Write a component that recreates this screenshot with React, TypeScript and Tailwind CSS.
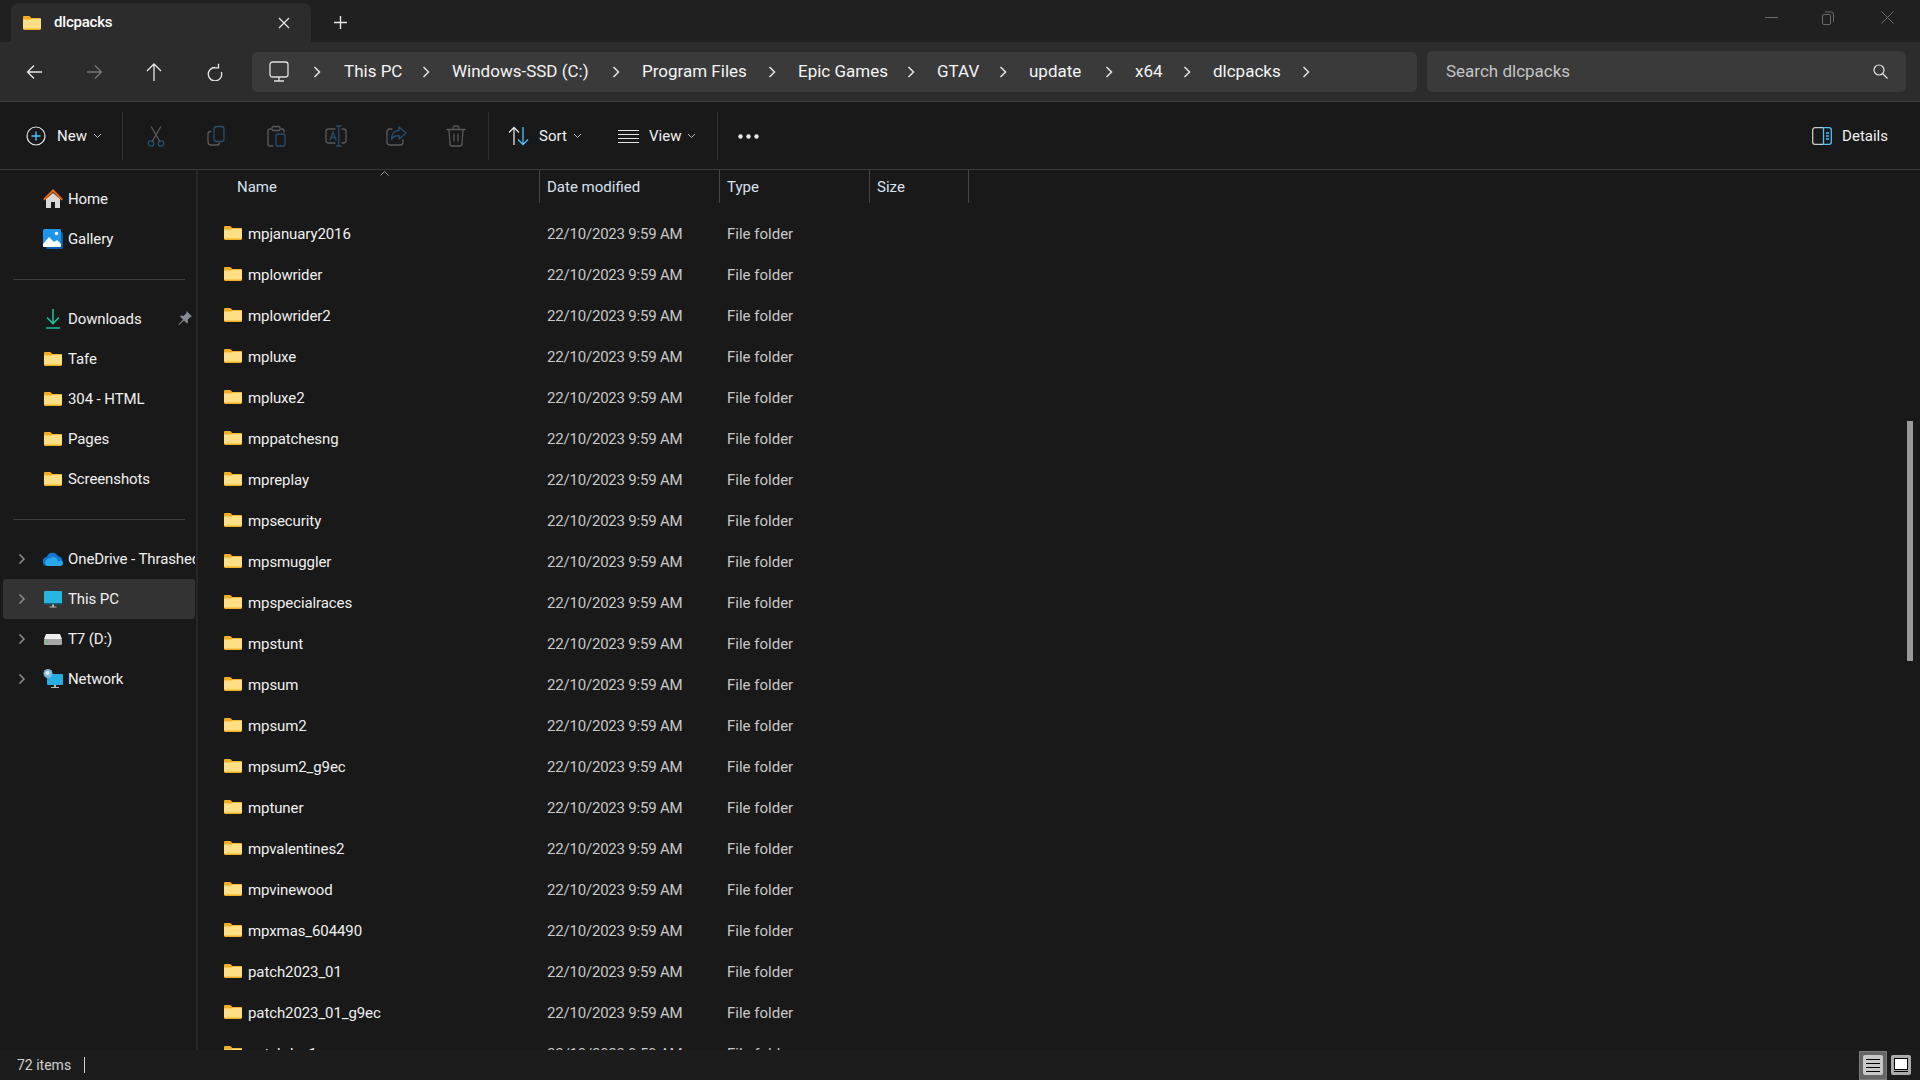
import React from "react";

const FONT = "font-['Roboto','Noto_Sans',sans-serif]";

function Folder({ className = "" }: { className?: string }) {
  return (
    <svg viewBox="0 0 18 14" className={className} width="18" height="14">
      <path d="M0 1.200C0 .5.5 0 1.200 0h4.600c.4 0 .7.1 1 .4L8.400 2H16.800c.7 0 1.200.5 1.200 1.200V4H0z" fill="#f2ac1c" />
      <path d="M0 3h18v9.800c0 .7-.5 1.200-1.200 1.200H1.200C.5 14 0 13.500 0 12.800z" fill="#f0b020" />
      <path d="M0 3.600h7.500L9 2.800h9v9.600H0z" fill="#ffdf85" />
    </svg>
  );
}

const Chevron = () => (
  <svg width="8" height="14" viewBox="0 0 8 14" fill="none" stroke="#e4e4e4" strokeWidth="1.500" className="shrink-0">
    <path d="M1.500 2l5 5-5 5" />
  </svg>
);

const Small = () => (
  <svg width="9" height="6" viewBox="0 0 9 6" fill="none" stroke="#b8b8b8" strokeWidth="1">
    <path d="M1 1l3.500 3.500L8 1" />
  </svg>
);

function Crumb({ label, w }: { label: string; w: string }) {
  return <span className={`block shrink-0 ml-[22px] whitespace-nowrap ${w}`}>{label}</span>;
}

function Stroke({ children }: { children: React.ReactNode }) {
  return (
    <svg width="24" height="24" viewBox="0 0 24 24" fill="none" strokeWidth="1.300" strokeLinecap="round" strokeLinejoin="round">
      {children}
    </svg>
  );
}

const DIM = "#5a5a5a";
const BLUE = "#24506e";

const tools = [
  <Stroke key="cut">
    <circle cx="7" cy="19.500" r="2.700" stroke={BLUE} />
    <circle cx="17" cy="19.500" r="2.700" stroke={BLUE} />
    <path d="M8.500 17L16.500 3M15.500 17L7.500 3" stroke={DIM} />
  </Stroke>,
  <Stroke key="copy">
    <rect x="10" y="2.500" width="10" height="15" rx="2.500" stroke={BLUE} />
    <path d="M7 7.500H6.500A2.500 2.500 0 0 0 4 10v8a3 3 0 0 0 3 3h6a2.500 2.500 0 0 0 2.500-2" stroke={DIM} />
  </Stroke>,
  <Stroke key="paste">
    <path d="M7 5H6a2 2 0 0 0-2 2v13a2 2 0 0 0 2 2h3M17 5h1a2 2 0 0 1 2 1.500V8" stroke={DIM} />
    <rect x="8" y="2.500" width="8" height="4" rx="1.500" stroke={DIM} />
    <rect x="12" y="10" width="9" height="12" rx="2" stroke={BLUE} />
  </Stroke>,
  <Stroke key="rename">
    <path d="M11 5H4.500A2.500 2.500 0 0 0 2 7.500v9A2.500 2.500 0 0 0 4.500 19H11M18 5h1.500A2.500 2.500 0 0 1 22 7.500v9a2.500 2.500 0 0 1-2.500 2.500H18" stroke={DIM} />
    <path d="M12.500 2h4.500M12.500 22h4.500M14.800 2v20" stroke={BLUE} />
    <path d="M6 16l3-8 3 8M7 13.500h4" stroke={BLUE} />
  </Stroke>,
  <Stroke key="share">
    <path d="M8 5H6a3 3 0 0 0-3 3v10a3 3 0 0 0 3 3h10a3 3 0 0 0 3-3v-2" stroke={DIM} />
    <path d="M15 3l7 6-7 6v-3.500c-3.500 0-6 1-7.500 4 0-5 2.500-9 7.500-9z" stroke={BLUE} />
  </Stroke>,
  <Stroke key="del">
    <path d="M3 5.500h18M9 5.500V4a2 2 0 0 1 2-2h2a2 2 0 0 1 2 2v1.500M5 5.500l1 14.500a2 2 0 0 0 2 2h8a2 2 0 0 0 2-2l1-14.500M10 10.500v6.500M14 10.500v6.500" stroke={DIM} />
  </Stroke>,
];

const rows = [
  "mpjanuary2016", "mplowrider", "mplowrider2", "mpluxe", "mpluxe2", "mppatchesng", "mpreplay",
  "mpsecurity", "mpsmuggler", "mpspecialraces", "mpstunt", "mpsum", "mpsum2", "mpsum2_g9ec",
  "mptuner", "mpvalentines2", "mpvinewood", "mpxmas_604490", "patch2023_01", "patch2023_01_g9ec", "patchday1",
];

function NavRow({ icon, label, pin, expand, selected }: { icon: React.ReactNode; label: string; pin?: boolean; expand?: boolean; selected?: boolean }) {
  return (
    <div className={`h-10 ml-[3px] w-[192px] flex items-center rounded-[3px] relative overflow-hidden ${selected ? "bg-[#333333]" : ""}`}>
      <div className="w-[14px] ml-[12px] flex justify-center shrink-0">
        {expand && (
          <svg width="8" height="12" viewBox="0 0 8 12" fill="none" stroke="#8a8a8a" strokeWidth="1.600">
            <path d="M1.500 1.500L6 6l-4.500 4.500" />
          </svg>
        )}
      </div>
      <div className="w-[20px] ml-[14px] flex justify-center shrink-0">{icon}</div>
      <span className="ml-[5px] text-[15px] tracking-[-0.1px] text-[#f0f0f0] whitespace-nowrap shrink-0">{label}</span>
      {pin && (
        <svg className="absolute right-[3px] top-[12px]" width="14" height="15" viewBox="0 0 14 15" fill="#858b90">
          <path d="M8.500 0l5.500 5.500-1.500.5-3 3 .5 2.500-1 1-3-3L1 14l-.5-.5 4.500-5-3-3 1-1 2.500.5 3-3z" />
        </svg>
      )}
    </div>
  );
}

export default function App() {
  return (
    <div className={`w-[1920px] h-[1080px] overflow-hidden flex flex-col bg-[#191919] text-[#f0f0f0] ${FONT}`}>
      {/* Title bar */}
      <div className="h-[42px] bg-[#202020] flex items-end shrink-0 pl-[11px] relative">
        <div className="w-[300px] h-[39px] rounded-t-[8px] bg-[#2c2c2c] flex items-center pl-[12px]">
          <Folder className="shrink-0" />
          <span className="ml-[13px] text-[15px] font-medium tracking-[-0.2px] text-white flex-1">dlcpacks</span>
          <svg className="mr-[21px]" width="12" height="12" viewBox="0 0 12 12" stroke="#e8e8e8" strokeWidth="1.200"><path d="M1 1l10 10M11 1L1 11" /></svg>
        </div>
        <svg className="ml-[23px] mb-[13px]" width="13" height="13" viewBox="0 0 13 13" stroke="#e8e8e8" strokeWidth="1.400"><path d="M6.500 0v13M0 6.500h13" /></svg>
        <div className="ml-auto flex items-center h-[35px] self-start pr-[26px]">
          <svg width="13" height="1" className="mr-[44px]"><rect width="13" height="1" fill="#6a6a6a" /></svg>
          <svg width="12" height="14" viewBox="0 0 12 14" fill="none" stroke="#6a6a6a" className="mr-[47px]"><rect x=".5" y="3.500" width="8" height="10" rx="1.500" /><path d="M3 1h6.500A2 2 0 0 1 11.500 3v8" /></svg>
          <svg width="13" height="13" viewBox="0 0 13 13" stroke="#6a6a6a" strokeWidth="1"><path d="M.5.5l12 12M12.500.5l-12 12" /></svg>
        </div>
      </div>

      {/* Nav bar */}
      <div className="h-[60px] shrink-0 bg-[#2c2c2c] border-b border-[#3f3f3f] flex items-center">
        <div className="w-[252px] flex items-center shrink-0 pl-[26px] gap-[43px]">
          <svg width="17" height="16" viewBox="0 0 17 16" fill="none" stroke="#e8e8e8" strokeWidth="1.300"><path d="M16 8H1.500M8 1.500L1.500 8 8 14.500" /></svg>
          <svg width="17" height="16" viewBox="0 0 17 16" fill="none" stroke="#777" strokeWidth="1.300"><path d="M1 8h14.500M9 1.500L15.500 8 9 14.500" /></svg>
          <svg width="16" height="18" viewBox="0 0 16 18" fill="none" stroke="#e8e8e8" strokeWidth="1.300"><path d="M8 18V1.500M1 8l7-7 7 7" /></svg>
          <svg className="ml-[2px]" width="16" height="18" viewBox="0 0 16 18" fill="none" stroke="#e8e8e8" strokeWidth="1.300"><path d="M8 4.500A6.700 6.700 0 1 0 14.300 9M11.500 .8v4H7.500" /></svg>
        </div>
        <div className="w-[1165px] h-[40px] rounded-[5px] bg-[#3a3a3a] flex items-center text-[17px] text-[#f4f4f4] shrink-0">
          <svg className="ml-[17px] shrink-0" width="20" height="22" viewBox="0 0 20 22" fill="none" stroke="#e0e0e0" strokeWidth="1.300">
            <rect x="1" y="1" width="18" height="15" rx="2.500" /><path d="M10 16v4M5 20h10" />
          </svg>
          <div className="ml-[24px] mr-[1px] shrink-0"><Chevron /></div>
          <Crumb label="This PC" w="w-[78px]" />
          <Chevron />
          <Crumb label="Windows-SSD (C:)" w="w-[160px]" />
          <Chevron />
          <Crumb label="Program Files" w="w-[126px]" />
          <Chevron />
          <Crumb label="Epic Games" w="w-[109px]" />
          <Chevron />
          <Crumb label="GTAV" w="w-[62px]" />
          <Chevron />
          <Crumb label="update" w="w-[76px]" />
          <Chevron />
          <Crumb label="x64" w="w-[48px]" />
          <Chevron />
          <Crumb label="dlcpacks" w="w-[89px]" />
          <Chevron />
        </div>
        <div className="ml-[10px] w-[479px] h-[41px] rounded-[5px] bg-[#3a3a3a] flex items-center pl-[19px] text-[17px] text-[#c4c4c4] shrink-0">
          <span className="flex-1">Search dlcpacks</span>
          <svg className="mr-[18px]" width="15" height="15" viewBox="0 0 15 15" fill="none" stroke="#e4e4e4" strokeWidth="1.200"><circle cx="6" cy="6" r="5" /><path d="M9.500 9.500L14.500 14.500" /></svg>
        </div>
      </div>

      {/* Toolbar */}
      <div className="h-[68px] shrink-0 bg-[#191919] border-b border-[#3a3a3a] flex items-center text-[15px] pt-[1px]">
        <div className="ml-[26px] flex items-center">
          <svg width="20" height="20" viewBox="0 0 20 20" fill="none">
            <circle cx="10" cy="10" r="9" stroke="#e4e4e4" strokeWidth="1.200" />
            <path d="M10 5.500v9M5.500 10h9" stroke="#4cc2ff" strokeWidth="1.400" />
          </svg>
          <span className="ml-[11px] w-[36px]">New</span>
          <Small />
        </div>
        <div className="ml-[20px] w-px h-[48px] bg-[#2e2e2e]" />
        <div className="flex items-center ml-[21px] gap-[36px]">{tools}</div>
        <div className="ml-[20px] w-px h-[48px] bg-[#2e2e2e]" />
        <div className="ml-[19px] flex items-center">
          <svg width="21" height="20" viewBox="0 0 21 20" fill="none" strokeWidth="1.300">
            <path d="M6 19V1.500M1 6.500l5-5 5 5" stroke="#e4e4e4" />
            <path d="M15 1v17.500M10 13.500l5 5 5-5" stroke="#4cc2ff" />
          </svg>
          <span className="ml-[10px] w-[34px]">Sort</span>
          <Small />
        </div>
        <div className="ml-[36px] flex items-center">
          <svg width="21" height="15" viewBox="0 0 21 15" stroke="#e4e4e4" strokeWidth="1.200"><path d="M0 1.500h21M0 5.500h21M0 9.500h21M0 13.500h21" /></svg>
          <span className="ml-[10px] w-[38px]">View</span>
          <Small />
        </div>
        <div className="ml-[21px] w-px h-[48px] bg-[#2e2e2e]" />
        <svg className="ml-[20px]" width="21" height="5" viewBox="0 0 21 5" fill="#e8e8e8"><circle cx="2.500" cy="2.500" r="2.200" /><circle cx="10.500" cy="2.500" r="2.200" /><circle cx="18.500" cy="2.500" r="2.200" /></svg>
        <div className="ml-auto mr-[32px] flex items-center">
          <svg width="20" height="18" viewBox="0 0 20 18" fill="none" strokeWidth="1.300">
            <path d="M12 .7H3A2.300 2.300 0 0 0 .7 3v12A2.300 2.300 0 0 0 3 17.300h9" stroke="#c8c8c8" />
            <path d="M11.500 .7H17A2.300 2.300 0 0 1 19.300 3v12a2.300 2.300 0 0 1-2.300 2.300h-5.500zM14 6h3M14 9h3M14 12h3" stroke="#4cc2ff" />
          </svg>
          <span className="ml-[10px]">Details</span>
        </div>
      </div>

      {/* Main */}
      <div className="flex-1 flex min-h-0 relative">
        {/* Sidebar */}
        <div className="w-[198px] shrink-0 border-r-2 border-[#262626] pt-[9px] overflow-hidden">
          <NavRow label="Home" icon={
            <svg width="20" height="20" viewBox="0 0 20 20">
              <path d="M3 10v9h5v-6h4v6h5v-9l-7-6z" fill="#d8d8d8" />
              <path d="M0 10L10 0l10 10-1.500 1.500L10 3 1.500 11.500z" fill="#e8680c" />
            </svg>} />
          <NavRow label="Gallery" icon={
            <svg width="20" height="20" viewBox="0 0 20 20">
              <rect x="3" y="3" width="17" height="17" rx="1.500" fill="#0f5cb0" />
              <rect width="18" height="18" rx="1.500" fill="#1f95ea" />
              <path d="M0 15l6-7 5 5 3-2 4 4v2a1 1 0 0 1-1 1H1a1 1 0 0 1-1-1z" fill="#fff" />
              <circle cx="13.500" cy="4.500" r="1.800" fill="#fff" />
            </svg>} />
          <div className="h-px bg-[#3c3c3c] ml-[13px] w-[172px] my-[19.500px]" />
          <NavRow label="Downloads" pin icon={
            <svg width="16" height="20" viewBox="0 0 16 20" fill="none" stroke="#1fbf9a" strokeWidth="1.600"><path d="M8 0v14M2 8.500l6 6 6-6M1 19h14" /></svg>} />
          <NavRow label="Tafe" icon={<Folder />} />
          <NavRow label="304 - HTML" icon={<Folder />} />
          <NavRow label="Pages" icon={<Folder />} />
          <NavRow label="Screenshots" icon={<Folder />} />
          <div className="h-px bg-[#3c3c3c] ml-[13px] w-[172px] my-[19.500px]" />
          <NavRow label="OneDrive - Thrashed" expand icon={
            <svg width="20" height="14" viewBox="0 0 20 14">
              <path d="M4.500 14A4.500 4.500 0 0 1 3.800 5 6 6 0 0 1 15 4.300 5 5 0 0 1 16 14z" fill="#0f78d4" />
              <path d="M4.500 14a4 4 0 0 1 2-7.500 5 5 0 0 1 8.500 3h1A2.300 2.300 0 0 1 20 11a3 3 0 0 1-3 3z" fill="#29a8ea" />
            </svg>} />
          <NavRow label="This PC" expand selected icon={
            <svg width="18" height="17" viewBox="0 0 18 17">
              <rect width="18" height="13" rx="1" fill="#28b6e0" />
              <rect x="0" y="12" width="18" height="1.500" fill="#14607f" />
              <path d="M8 13.500h2v2H8zM5.500 15.500h7v1h-7z" fill="#b8b8b8" />
            </svg>} />
          <NavRow label="T7 (D:)" expand icon={
            <svg width="18" height="11" viewBox="0 0 18 11">
              <path d="M2 0h14l2 5H0z" fill="#eeeeee" />
              <rect y="5" width="18" height="6" rx="1" fill="#a8a8a8" />
              <rect x="2" y="7" width="2" height="1.500" fill="#38d070" />
            </svg>} />
          <NavRow label="Network" expand icon={
            <svg width="20" height="20" viewBox="0 0 20 20">
              <rect x="4" y="5" width="16" height="11" rx="1" fill="#26aee0" />
              <path d="M11 16h2v2h-2zM8 18h8v1H8z" fill="#b8b8b8" />
              <circle cx="5" cy="4.500" r="4.500" fill="#7fb8d8" />
              <circle cx="4.500" cy="4" r="2" fill="#d8eef8" />
            </svg>} />
        </div>

        {/* File list */}
        <div className="flex-1 min-w-0 overflow-hidden text-[15px]">
          <div className="h-[33px] flex relative text-[#d8e2ee]">
            <div className="w-[342px] pl-[39px] pt-[1px] flex items-center border-r border-[#454545]">Name</div>
            <div className="w-[180px] pl-[7px] pt-[1px] flex items-center border-r border-[#454545]">Date modified</div>
            <div className="w-[150px] pl-[7px] pt-[1px] flex items-center border-r border-[#454545]">Type</div>
            <div className="w-[99px] pl-[7px] pt-[1px] flex items-center border-r border-[#454545]">Size</div>
            <svg className="absolute left-[182px] top-[1px]" width="9" height="5" viewBox="0 0 9 5" fill="none" stroke="#9a9a9a"><path d="M.5 4.500l4-4 4 4" /></svg>
          </div>
          <div className="pt-[11px]">
            {rows.map((r) => (
              <div key={r} className="h-[41px] flex items-center">
                <div className="w-[342px] flex items-center pl-[26px]">
                  <Folder className="shrink-0 -mt-[3px]" />
                  <span className="ml-[6px] tracking-[-0.1px]">{r}</span>
                </div>
                <div className="w-[180px] pl-[7px] text-[#c8c8c8] tracking-[-0.2px]">22/10/2023 9:59 AM</div>
                <div className="pl-[7px] text-[#c8c8c8]">File folder</div>
              </div>
            ))}
          </div>
        </div>

        {/* Scrollbar */}
        <div className="absolute right-[7px] top-[251px] w-[6px] h-[240px] bg-[#999999]" />
      </div>

      {/* Status */}
      <div className="h-[30px] shrink-0 bg-[#1c1c1c] flex items-center text-[14px] text-[#d0d0d0] pl-[17px] relative">
        <span>72 items</span>
        <div className="ml-[13px] w-px h-[16px] bg-[#d0d0d0]" />
        <div className="ml-auto mr-[9px] flex items-center">
          <div className="w-[28px] h-[29px] bg-[#666666] border border-[#7a7a7a] flex items-center justify-center">
            <div className="w-[20px] h-[20px] rounded-[2px] bg-[#c8c8c8] flex flex-col justify-center gap-[3px] items-center">
              <div className="w-[14px] h-[1px] bg-black" /><div className="w-[14px] h-[1px] bg-black" /><div className="w-[14px] h-[1px] bg-black" /><div className="w-[14px] h-[1px] bg-black" />
            </div>
          </div>
          <div className="ml-[4px] w-[20px] h-[20px] rounded-[2px] bg-[#aaaaaa] flex flex-col items-center justify-center gap-[1px] -mt-[1px]">
            <div className="w-[14px] h-[12px] bg-white border border-black" />
            <div className="w-[14px] h-[1px] bg-black" />
          </div>
        </div>
      </div>
    </div>
  );
}
